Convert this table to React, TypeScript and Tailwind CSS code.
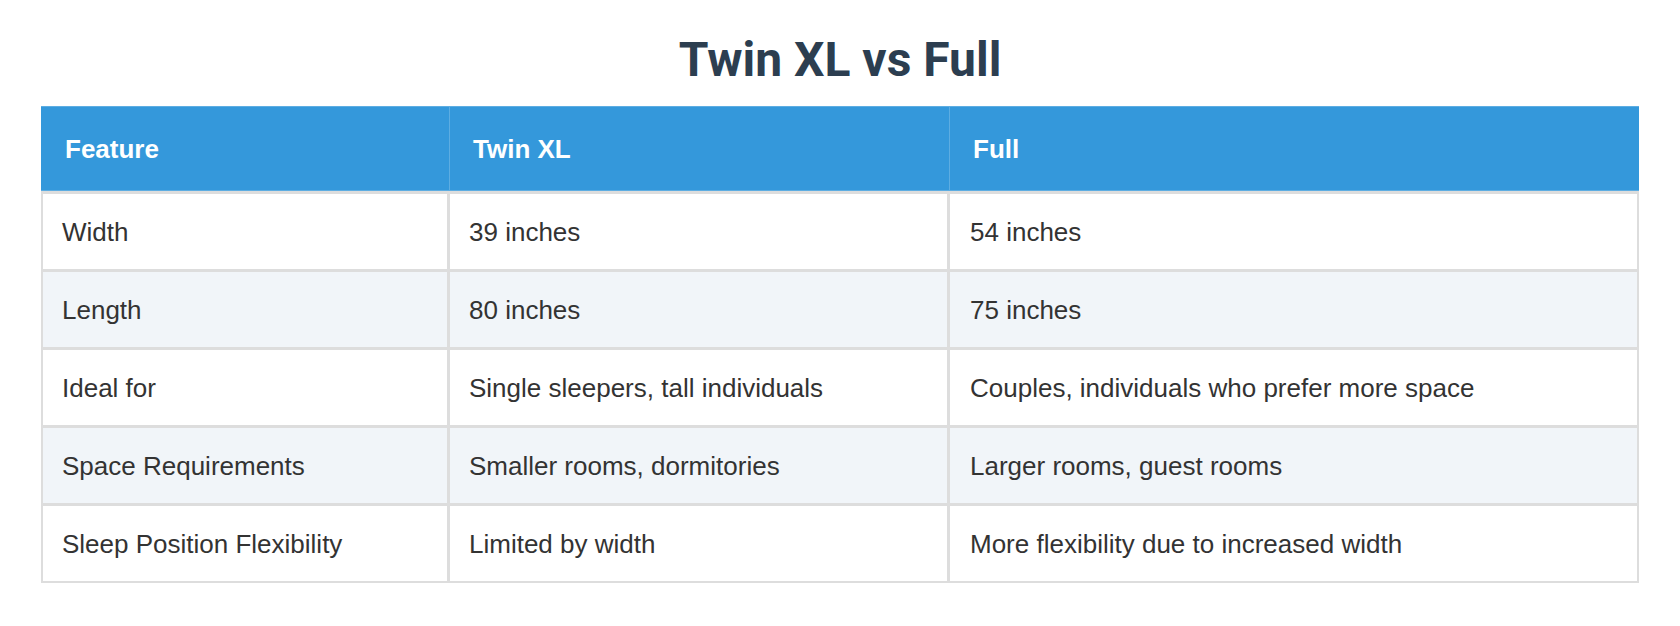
import React from "react";

const rows: [string, string, string][] = [
  ["Width", "39 inches", "54 inches"],
  ["Length", "80 inches", "75 inches"],
  ["Ideal for", "Single sleepers, tall individuals", "Couples, individuals who prefer more space"],
  ["Space Requirements", "Smaller rooms, dormitories", "Larger rooms, guest rooms"],
  ["Sleep Position Flexibility", "Limited by width", "More flexibility due to increased width"],
];

export default function App() {
  return (
    <div className="min-h-[626px] bg-white px-[41px] pt-[31px]">
      <h1
        className="mb-[17px] text-center text-[48px] font-bold leading-[58px] text-[#2c3e50]"
        style={{ fontFamily: "Roboto, 'Liberation Sans', Arial, sans-serif" }}
      >
        Twin XL vs Full
      </h1>
      <table
        className="w-full table-fixed border-separate border-spacing-0 text-[26px] leading-[30px]"
        style={{ fontFamily: "'Liberation Sans', Arial, Helvetica, sans-serif" }}
      >
        <thead>
          <tr className="bg-[#3498db]">
            <th className="w-[409px] border-t border-r border-b border-[#5dade2] pl-[24px] pr-4 pt-[27px] pb-[26px] text-left font-bold text-white">
              Feature
            </th>
            <th className="w-[500px] border-t border-r border-b border-[#5dade2] pl-[23px] pr-4 pt-[27px] pb-[26px] text-left font-bold text-white">
              Twin XL
            </th>
            <th className="border-t border-b border-[#5dade2] pl-[23px] pr-4 pt-[27px] pb-[26px] text-left font-bold text-white">
              Full
            </th>
          </tr>
        </thead>
        <tbody>
          {rows.map((r, i) => {
            const even = i % 2 === 1;
            const first = i === 0;
            const last = i === rows.length - 1;
            const bg = even ? "bg-[#f1f5f9]" : "bg-white";
            const tb = `${first ? "border-t-[3px]" : ""} ${last ? "border-b-2" : "border-b-[3px]"}`;
            return (
              <tr key={r[0]} className={bg}>
                <td className={`border-l-2 border-r-[3px] ${tb} border-[#dddddd] px-[19px] pt-[23px] pb-[22px] text-[#333333]`}>
                  {r[0]}
                </td>
                <td className={`border-r-[3px] ${tb} border-[#dddddd] px-[19px] pt-[23px] pb-[22px] text-[#333333]`}>
                  {r[1]}
                </td>
                <td className={`border-r-2 ${tb} border-[#dddddd] pl-[20px] pr-[19px] pt-[23px] pb-[22px] text-[#333333]`}>
                  {r[2]}
                </td>
              </tr>
            );
          })}
        </tbody>
      </table>
    </div>
  );
}
